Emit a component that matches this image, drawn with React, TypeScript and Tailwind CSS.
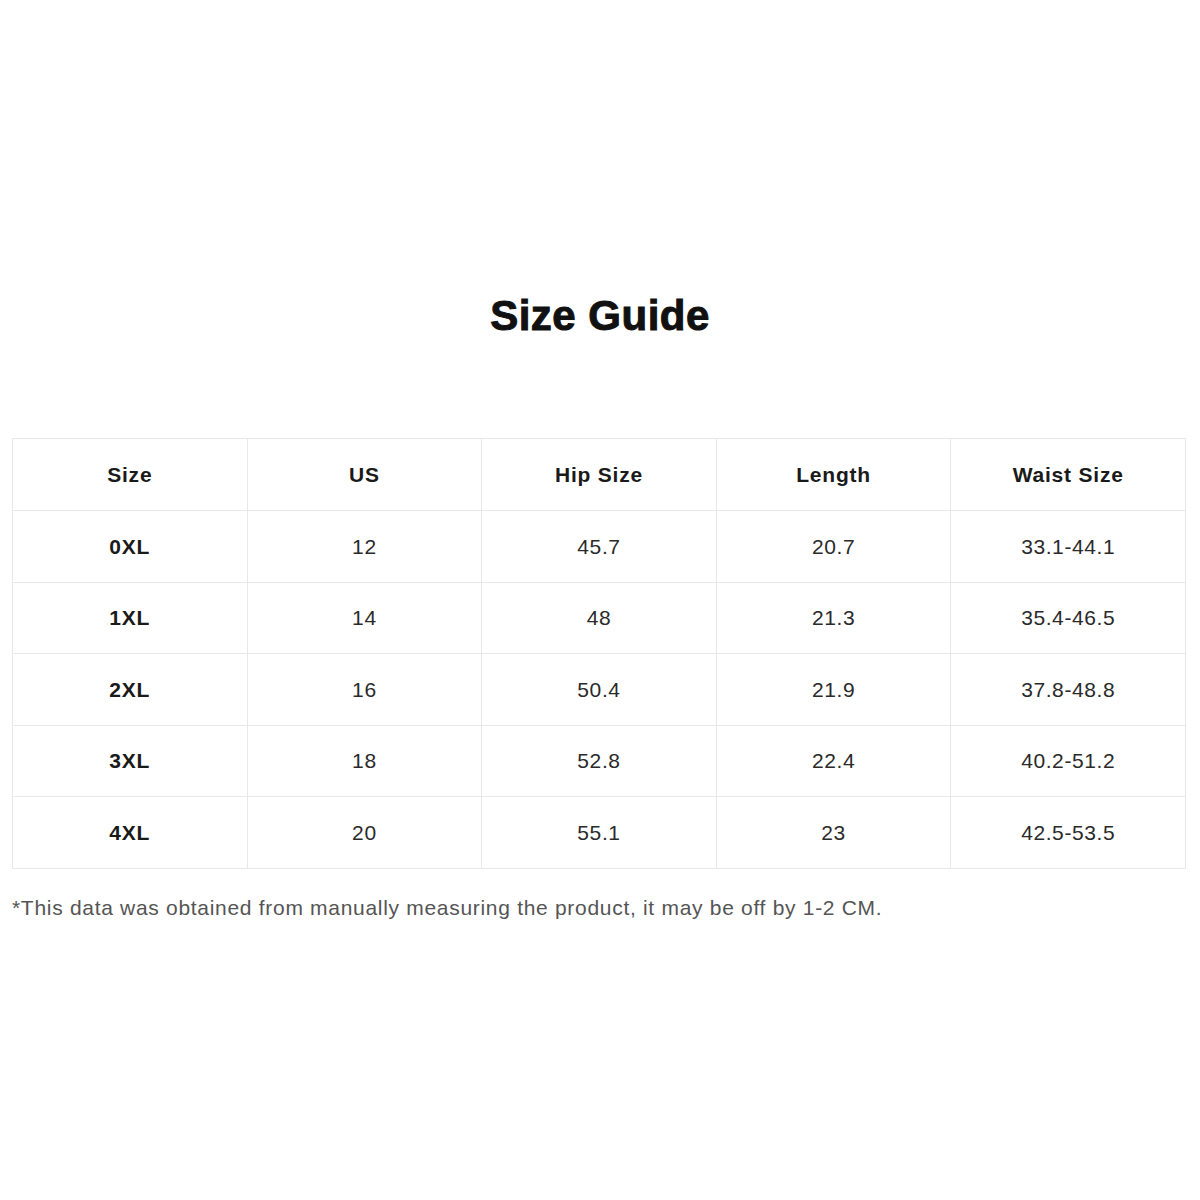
const headers = ["Size", "US", "Hip Size", "Length", "Waist Size"];

const rows = [
  ["0XL", "12", "45.7", "20.7", "33.1-44.1"],
  ["1XL", "14", "48", "21.3", "35.4-46.5"],
  ["2XL", "16", "50.4", "21.9", "37.8-48.8"],
  ["3XL", "18", "52.8", "22.4", "40.2-51.2"],
  ["4XL", "20", "55.1", "23", "42.5-53.5"],
];

const App = () => {
  return (
    <div className="w-[1200px] h-[1200px] bg-white font-['Liberation_Sans',Arial,sans-serif] text-[#1a1a1a]">
      <div className="pt-[292px]">
        <h1 className="text-center text-[42px] leading-[48px] font-bold text-[#111] tracking-[0.5px] [-webkit-text-stroke:1px_#111]">
          Size Guide
        </h1>
      </div>
      <div className="mt-[98px] ml-[12px] w-[1174px] border-l border-t border-[#e8e8e8]">
        <div className="grid grid-cols-5 h-[72px] border-b border-[#e8e8e8]">
          {headers.map((h, i) => (
            <div
              key={i}
              className="flex items-center justify-center border-r border-[#e8e8e8] text-[21px] tracking-[0.8px] font-bold"
            >
              {h}
            </div>
          ))}
        </div>
        {rows.map((row, r) => (
          <div
            key={r}
            className="grid grid-cols-5 h-[71.5px] border-b border-[#e8e8e8]"
          >
            {row.map((cell, c) => (
              <div
                key={c}
                className={`flex items-center justify-center border-r border-[#e8e8e8] text-[21px] ${
                  c === 0 ? "font-bold tracking-[0.8px]" : "text-[#2a2a2a] tracking-[0.6px]"
                }`}
              >
                {cell}
              </div>
            ))}
          </div>
        ))}
      </div>
      <p className="mt-[26px] ml-[12px] text-[21px] leading-[26px] tracking-[0.7px] text-[#555]">
        *This data was obtained from manually measuring the product, it may be off by 1-2 CM.
      </p>
    </div>
  );
};

export default App;
